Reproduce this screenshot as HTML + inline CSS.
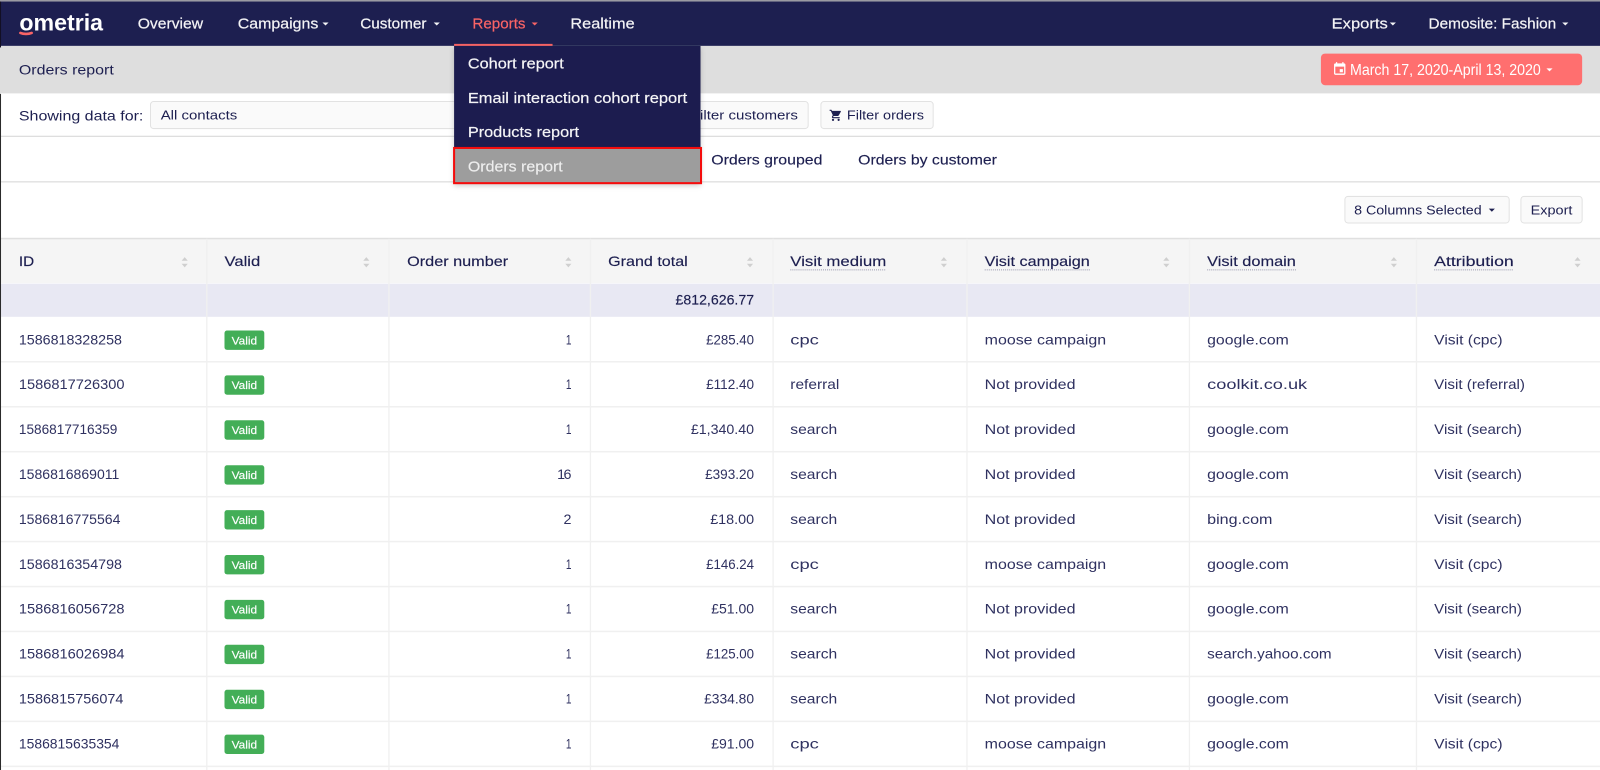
<!DOCTYPE html>
<html><head><meta charset="utf-8"><title>Orders report</title>
<style>
html,body{margin:0;padding:0;background:#fff;width:1600px;height:770px;overflow:hidden}
svg{display:block;position:absolute;left:0;top:0}
text{font-family:"Liberation Sans",sans-serif;font-size:14px;fill:#2f3160;white-space:pre}
.n{fill:#f4f4f6;font-size:14.5px;stroke:#f4f4f6;stroke-width:.2}
.h{fill:#1d1f50;stroke:#1d1f50;stroke-width:.15}
.b{font-size:11px;fill:#fff;stroke:#fff;stroke-width:.15}
.s{font-size:13px;fill:#1d1f50}
.e{text-anchor:end}
</style></head><body>
<svg width="1600" height="770" viewBox="0 0 1568 754.6" xmlns="http://www.w3.org/2000/svg">
<defs>
<path id="c" d="M0 0h6l-3 3z"/>
<g id="so"><path d="M-3 3l3-3.500l3 3.500z" fill="#cfcfcf"/><path d="M-3 6h6l-3 3.500z" fill="#cfcfcf"/></g>
<path id="cart" d="M7 18c-1.100 0-1.990.900-1.990 2S5.900 22 7 22s2-.900 2-2-.900-2-2-2zM1 2v2h2l3.600 7.590-1.350 2.450c-.160.280-.250.610-.250.960 0 1.100.900 2 2 2h12v-2H7.420c-.140 0-.250-.110-.250-.250l.030-.120.900-1.630h7.450c.750 0 1.410-.410 1.750-1.030l3.580-6.490c.080-.140.120-.310.120-.480 0-.550-.450-1-1-1H5.210l-.940-2H1zm16 16c-1.100 0-1.990.900-1.990 2s.890 2 1.990 2 2-.900 2-2-.900-2-2-2z"/>
<filter id="sh" x="-5%" y="-5%" width="110%" height="115%"><feDropShadow dx="0" dy="2" stdDeviation="2.500" flood-color="#000" flood-opacity=".2"/></filter>
</defs>

<!-- page bands -->
<rect width="1568" height="755" fill="#fff"/>
<rect width="1568" height="1.500" fill="#9a9aa2"/>
<rect y="1.500" width="1568" height="43.500" fill="#1d1f50"/>
<rect y="45" width="1568" height="46.500" fill="#dedede"/>
<rect y="133" width="1568" height="1.200" fill="#dcdcdc"/>
<rect y="177.600" width="1568" height="1.200" fill="#dcdcdc"/>

<!-- logo -->
<text x="19" y="30" textLength="82" lengthAdjust="spacingAndGlyphs" style="font-size:23px;font-weight:bold;fill:#fff">ometria</text>
<path d="M20 32.300c3 1.300 8 1.300 11 0" stroke="#f96466" stroke-width="2.600" fill="none" stroke-linecap="round"/>

<!-- nav -->
<text class="n" x="135" y="28" textLength="64" lengthAdjust="spacingAndGlyphs">Overview</text>
<text class="n" x="233" y="28" textLength="79" lengthAdjust="spacingAndGlyphs">Campaigns</text><use href="#c" x="316" y="22" fill="#f4f4f6"/>
<text class="n" x="353" y="28" textLength="65" lengthAdjust="spacingAndGlyphs">Customer</text><use href="#c" x="425" y="22" fill="#f4f4f6"/>
<text class="n" x="463" y="28" textLength="52" lengthAdjust="spacingAndGlyphs" style="fill:#f96466;stroke:#f96466">Reports</text><use href="#c" x="521" y="22" fill="#f96466"/>
<rect x="445" y="43" width="96.500" height="2.200" fill="#f96466"/>
<text class="n" x="559" y="28" textLength="63" lengthAdjust="spacingAndGlyphs">Realtime</text>
<text class="n" x="1305" y="28" textLength="55" lengthAdjust="spacingAndGlyphs">Exports</text><use href="#c" x="1362" y="22" fill="#f4f4f6"/>
<text class="n" x="1400" y="28" textLength="125" lengthAdjust="spacingAndGlyphs">Demosite: Fashion</text><use href="#c" x="1531" y="22" fill="#f4f4f6"/>

<!-- sub bar -->
<text x="18.500" y="73" textLength="93" lengthAdjust="spacingAndGlyphs" style="fill:#1d1f50">Orders report</text>
<rect x="1294.500" y="52.500" width="256" height="31" rx="4" fill="#ff6f6f"/>
<g transform="translate(1305.500,60.300) scale(.62)" fill="#fff"><path d="M17 12h-5v5h5v-5zM16 1v2H8V1H6v2H5c-1.110 0-1.990.900-1.990 2L3 19c0 1.100.890 2 2 2h14c1.100 0 2-.900 2-2V5c0-1.100-.900-2-2-2h-1V1h-2zm3 18H5V8h14v11z"/></g>
<text x="1323" y="73.500" textLength="187" lengthAdjust="spacingAndGlyphs" style="font-size:15.500px;fill:#fff">March 17, 2020-April 13, 2020</text>
<use href="#c" x="1515.500" y="67" fill="#fff"/>

<!-- filters row -->
<text x="18.500" y="118" textLength="122" lengthAdjust="spacingAndGlyphs" style="fill:#1d1f50">Showing data for:</text>
<rect x="147.500" y="99.500" width="320" height="26.500" rx="3" fill="#fafafa" stroke="#e2e2e2"/>
<text x="157.500" y="117" textLength="75" lengthAdjust="spacingAndGlyphs" class="s">All contacts</text>
<rect x="640" y="99.500" width="152" height="26.500" rx="3" fill="#fafafa" stroke="#e2e2e2"/>
<text x="677" y="117" textLength="105" lengthAdjust="spacingAndGlyphs" class="s">Filter customers</text>
<rect x="804.500" y="99.500" width="110" height="26.500" rx="3" fill="#fafafa" stroke="#e2e2e2"/>
<g transform="translate(812.500,106.500) scale(.55)" fill="#1d1f50"><use href="#cart"/></g>
<text x="830" y="117" textLength="75.500" lengthAdjust="spacingAndGlyphs" class="s">Filter orders</text>

<!-- tabs -->
<text x="697" y="161" textLength="109" lengthAdjust="spacingAndGlyphs" class="h">Orders grouped</text>
<text x="841" y="161" textLength="136" lengthAdjust="spacingAndGlyphs" class="h">Orders by customer</text>

<!-- dropdown -->
<rect x="445" y="45" width="241.500" height="135" fill="#1d1f50" filter="url(#sh)"/>
<text class="n" x="458.500" y="67" textLength="94" lengthAdjust="spacingAndGlyphs">Cohort report</text>
<text class="n" x="458.500" y="101" textLength="215" lengthAdjust="spacingAndGlyphs">Email interaction cohort report</text>
<text class="n" x="458.500" y="134.500" textLength="109" lengthAdjust="spacingAndGlyphs">Products report</text>
<rect x="445" y="145" width="242" height="34.500" fill="#9d9d9d" stroke="#f40c0c" stroke-width="2"/>
<text x="458.500" y="168" textLength="93" lengthAdjust="spacingAndGlyphs" style="font-size:14.500px;fill:#eeeeee;stroke:#eeeeee;stroke-width:.15">Orders report</text>

<!-- table tools -->
<rect x="1318" y="192.500" width="161" height="26" rx="3" fill="#fafafa" stroke="#e2e2e2"/>
<text x="1327" y="210" textLength="125" lengthAdjust="spacingAndGlyphs" class="s">8 Columns Selected</text>
<use href="#c" x="1459" y="204.500" fill="#1d1f50"/>
<rect x="1490.500" y="192.500" width="60" height="26" rx="3" fill="#fafafa" stroke="#e2e2e2"/>
<text x="1500" y="210" textLength="41" lengthAdjust="spacingAndGlyphs" class="s">Export</text>

<!-- table backgrounds -->
<rect y="233.500" width="1568" height="44" fill="#f5f5f5"/>
<rect y="233" width="1568" height="1.500" fill="#e0e0e0"/>
<rect y="278" width="1568" height="32.500" fill="#e8e8f3"/>
<g fill="#f0f0f0">
<rect y="353.800" width="1568" height="1.500"/><rect y="397.900" width="1568" height="1.500"/><rect y="441.900" width="1568" height="1.500"/><rect y="486" width="1568" height="1.500"/><rect y="530" width="1568" height="1.500"/><rect y="574.100" width="1568" height="1.500"/><rect y="618.100" width="1568" height="1.500"/><rect y="662.200" width="1568" height="1.500"/><rect y="706.200" width="1568" height="1.500"/><rect y="750.300" width="1568" height="1.500"/>
<rect x="202" y="234" width="1.300" height="521"/><rect x="380.500" y="234" width="1.300" height="521"/><rect x="578" y="234" width="1.300" height="521"/><rect x="757" y="234" width="1.300" height="521"/><rect x="947" y="234" width="1.300" height="521"/><rect x="1165" y="234" width="1.300" height="521"/><rect x="1387.500" y="234" width="1.300" height="521"/>
</g>

<!-- headers -->
<text class="h" x="18.500" y="260.500" textLength="15" lengthAdjust="spacingAndGlyphs">ID</text>
<text class="h" x="220" y="260.500" textLength="35" lengthAdjust="spacingAndGlyphs">Valid</text>
<text class="h" x="399" y="260.500" textLength="99" lengthAdjust="spacingAndGlyphs">Order number</text>
<text class="h" x="596" y="260.500" textLength="78" lengthAdjust="spacingAndGlyphs">Grand total</text>
<text class="h" x="774.500" y="260.500" textLength="94" lengthAdjust="spacingAndGlyphs">Visit medium</text>
<text class="h" x="965" y="260.500" textLength="103" lengthAdjust="spacingAndGlyphs">Visit campaign</text>
<text class="h" x="1183" y="260.500" textLength="87" lengthAdjust="spacingAndGlyphs">Visit domain</text>
<text class="h" x="1405.500" y="260.500" textLength="78" lengthAdjust="spacingAndGlyphs">Attribution</text>
<g stroke="#9a9ab0" stroke-width="1" stroke-dasharray="1 1">
<path d="M774.500 264.500h94M965 264.500h103M1183 264.500h87M1405.500 264.500h78"/>
</g>
<use href="#so" x="181" y="252.500"/><use href="#so" x="359" y="252.500"/><use href="#so" x="557" y="252.500"/><use href="#so" x="735" y="252.500"/><use href="#so" x="925" y="252.500"/><use href="#so" x="1143" y="252.500"/><use href="#so" x="1366" y="252.500"/><use href="#so" x="1546" y="252.500"/>

<text class="h e" x="739" y="298.500" textLength="77" lengthAdjust="spacingAndGlyphs">£812,626.77</text>

<g transform="translate(0,-.6)">
<!-- row 1 -->
<text x="18.500" y="338" textLength="101" lengthAdjust="spacingAndGlyphs">1586818328258</text>
<rect x="220" y="324.500" width="39" height="19" rx="2.500" fill="#43ae57"/><text class="b" x="227" y="338" textLength="25" lengthAdjust="spacingAndGlyphs">Valid</text>
<text class="e" x="560" y="338" textLength="5.500" lengthAdjust="spacingAndGlyphs">1</text>
<text class="e" x="739" y="338" textLength="47" lengthAdjust="spacingAndGlyphs">£285.40</text>
<text x="774.500" y="338" textLength="28" lengthAdjust="spacingAndGlyphs">cpc</text>
<text x="965" y="338" textLength="119" lengthAdjust="spacingAndGlyphs">moose campaign</text>
<text x="1183" y="338" textLength="80" lengthAdjust="spacingAndGlyphs">google.com</text>
<text x="1405.500" y="338" textLength="67" lengthAdjust="spacingAndGlyphs">Visit (cpc)</text>

<!-- row 2 -->
<text x="18.500" y="382" textLength="103.500" lengthAdjust="spacingAndGlyphs">1586817726300</text>
<rect x="220" y="368.500" width="39" height="19" rx="2.500" fill="#43ae57"/><text class="b" x="227" y="382" textLength="25" lengthAdjust="spacingAndGlyphs">Valid</text>
<text class="e" x="560" y="382" textLength="5.500" lengthAdjust="spacingAndGlyphs">1</text>
<text class="e" x="739" y="382" textLength="47" lengthAdjust="spacingAndGlyphs">£112.40</text>
<text x="774.500" y="382" textLength="48" lengthAdjust="spacingAndGlyphs">referral</text>
<text x="965" y="382" textLength="89" lengthAdjust="spacingAndGlyphs">Not provided</text>
<text x="1183" y="382" textLength="98" lengthAdjust="spacingAndGlyphs">coolkit.co.uk</text>
<text x="1405.500" y="382" textLength="89" lengthAdjust="spacingAndGlyphs">Visit (referral)</text>

<!-- row 3 -->
<text x="18.500" y="426" textLength="96.500" lengthAdjust="spacingAndGlyphs">1586817716359</text>
<rect x="220" y="412.500" width="39" height="19" rx="2.500" fill="#43ae57"/><text class="b" x="227" y="426" textLength="25" lengthAdjust="spacingAndGlyphs">Valid</text>
<text class="e" x="560" y="426" textLength="5.500" lengthAdjust="spacingAndGlyphs">1</text>
<text class="e" x="739" y="426" textLength="62" lengthAdjust="spacingAndGlyphs">£1,340.40</text>
<text x="774.500" y="426" textLength="46" lengthAdjust="spacingAndGlyphs">search</text>
<text x="965" y="426" textLength="89" lengthAdjust="spacingAndGlyphs">Not provided</text>
<text x="1183" y="426" textLength="80" lengthAdjust="spacingAndGlyphs">google.com</text>
<text x="1405.500" y="426" textLength="86" lengthAdjust="spacingAndGlyphs">Visit (search)</text>

<!-- row 4 -->
<text x="18.500" y="470" textLength="98.500" lengthAdjust="spacingAndGlyphs">1586816869011</text>
<rect x="220" y="456.500" width="39" height="19" rx="2.500" fill="#43ae57"/><text class="b" x="227" y="470" textLength="25" lengthAdjust="spacingAndGlyphs">Valid</text>
<text class="e" x="560" y="470" textLength="14" lengthAdjust="spacing">16</text>
<text class="e" x="739" y="470" textLength="48" lengthAdjust="spacingAndGlyphs">£393.20</text>
<text x="774.500" y="470" textLength="46" lengthAdjust="spacingAndGlyphs">search</text>
<text x="965" y="470" textLength="89" lengthAdjust="spacingAndGlyphs">Not provided</text>
<text x="1183" y="470" textLength="80" lengthAdjust="spacingAndGlyphs">google.com</text>
<text x="1405.500" y="470" textLength="86" lengthAdjust="spacingAndGlyphs">Visit (search)</text>

<!-- row 5 -->
<text x="18.500" y="514" textLength="99.500" lengthAdjust="spacingAndGlyphs">1586816775564</text>
<rect x="220" y="500.500" width="39" height="19" rx="2.500" fill="#43ae57"/><text class="b" x="227" y="514" textLength="25" lengthAdjust="spacingAndGlyphs">Valid</text>
<text class="e" x="560" y="514">2</text>
<text class="e" x="739" y="514" textLength="43" lengthAdjust="spacingAndGlyphs">£18.00</text>
<text x="774.500" y="514" textLength="46" lengthAdjust="spacingAndGlyphs">search</text>
<text x="965" y="514" textLength="89" lengthAdjust="spacingAndGlyphs">Not provided</text>
<text x="1183" y="514" textLength="64" lengthAdjust="spacingAndGlyphs">bing.com</text>
<text x="1405.500" y="514" textLength="86" lengthAdjust="spacingAndGlyphs">Visit (search)</text>

<!-- row 6 -->
<text x="18.500" y="558" textLength="101" lengthAdjust="spacingAndGlyphs">1586816354798</text>
<rect x="220" y="544.500" width="39" height="19" rx="2.500" fill="#43ae57"/><text class="b" x="227" y="558" textLength="25" lengthAdjust="spacingAndGlyphs">Valid</text>
<text class="e" x="560" y="558" textLength="5.500" lengthAdjust="spacingAndGlyphs">1</text>
<text class="e" x="739" y="558" textLength="47" lengthAdjust="spacingAndGlyphs">£146.24</text>
<text x="774.500" y="558" textLength="28" lengthAdjust="spacingAndGlyphs">cpc</text>
<text x="965" y="558" textLength="119" lengthAdjust="spacingAndGlyphs">moose campaign</text>
<text x="1183" y="558" textLength="80" lengthAdjust="spacingAndGlyphs">google.com</text>
<text x="1405.500" y="558" textLength="67" lengthAdjust="spacingAndGlyphs">Visit (cpc)</text>

<!-- row 7 -->
<text x="18.500" y="602" textLength="103.500" lengthAdjust="spacingAndGlyphs">1586816056728</text>
<rect x="220" y="588.500" width="39" height="19" rx="2.500" fill="#43ae57"/><text class="b" x="227" y="602" textLength="25" lengthAdjust="spacingAndGlyphs">Valid</text>
<text class="e" x="560" y="602" textLength="5.500" lengthAdjust="spacingAndGlyphs">1</text>
<text class="e" x="739" y="602" textLength="42" lengthAdjust="spacingAndGlyphs">£51.00</text>
<text x="774.500" y="602" textLength="46" lengthAdjust="spacingAndGlyphs">search</text>
<text x="965" y="602" textLength="89" lengthAdjust="spacingAndGlyphs">Not provided</text>
<text x="1183" y="602" textLength="80" lengthAdjust="spacingAndGlyphs">google.com</text>
<text x="1405.500" y="602" textLength="86" lengthAdjust="spacingAndGlyphs">Visit (search)</text>

<!-- row 8 -->
<text x="18.500" y="646" textLength="103.500" lengthAdjust="spacingAndGlyphs">1586816026984</text>
<rect x="220" y="632.500" width="39" height="19" rx="2.500" fill="#43ae57"/><text class="b" x="227" y="646" textLength="25" lengthAdjust="spacingAndGlyphs">Valid</text>
<text class="e" x="560" y="646" textLength="5.500" lengthAdjust="spacingAndGlyphs">1</text>
<text class="e" x="739" y="646" textLength="47" lengthAdjust="spacingAndGlyphs">£125.00</text>
<text x="774.500" y="646" textLength="46" lengthAdjust="spacingAndGlyphs">search</text>
<text x="965" y="646" textLength="89" lengthAdjust="spacingAndGlyphs">Not provided</text>
<text x="1183" y="646" textLength="122" lengthAdjust="spacingAndGlyphs">search.yahoo.com</text>
<text x="1405.500" y="646" textLength="86" lengthAdjust="spacingAndGlyphs">Visit (search)</text>

<!-- row 9 -->
<text x="18.500" y="690" textLength="102.500" lengthAdjust="spacingAndGlyphs">1586815756074</text>
<rect x="220" y="676.500" width="39" height="19" rx="2.500" fill="#43ae57"/><text class="b" x="227" y="690" textLength="25" lengthAdjust="spacingAndGlyphs">Valid</text>
<text class="e" x="560" y="690" textLength="5.500" lengthAdjust="spacingAndGlyphs">1</text>
<text class="e" x="739" y="690" textLength="49" lengthAdjust="spacingAndGlyphs">£334.80</text>
<text x="774.500" y="690" textLength="46" lengthAdjust="spacingAndGlyphs">search</text>
<text x="965" y="690" textLength="89" lengthAdjust="spacingAndGlyphs">Not provided</text>
<text x="1183" y="690" textLength="80" lengthAdjust="spacingAndGlyphs">google.com</text>
<text x="1405.500" y="690" textLength="86" lengthAdjust="spacingAndGlyphs">Visit (search)</text>

<!-- row 10 -->
<text x="18.500" y="734" textLength="98.500" lengthAdjust="spacingAndGlyphs">1586815635354</text>
<rect x="220" y="720.500" width="39" height="19" rx="2.500" fill="#43ae57"/><text class="b" x="227" y="734" textLength="25" lengthAdjust="spacingAndGlyphs">Valid</text>
<text class="e" x="560" y="734" textLength="5.500" lengthAdjust="spacingAndGlyphs">1</text>
<text class="e" x="739" y="734" textLength="42" lengthAdjust="spacingAndGlyphs">£91.00</text>
<text x="774.500" y="734" textLength="28" lengthAdjust="spacingAndGlyphs">cpc</text>
<text x="965" y="734" textLength="119" lengthAdjust="spacingAndGlyphs">moose campaign</text>
<text x="1183" y="734" textLength="80" lengthAdjust="spacingAndGlyphs">google.com</text>
<text x="1405.500" y="734" textLength="67" lengthAdjust="spacingAndGlyphs">Visit (cpc)</text>
</g>

<!-- window edge -->
<rect x="0" y="1.500" width="1" height="45" fill="#120f24"/>
<rect x="0" y="92" width="1" height="663" fill="#2a2a2a"/>
</svg>
</body></html>
